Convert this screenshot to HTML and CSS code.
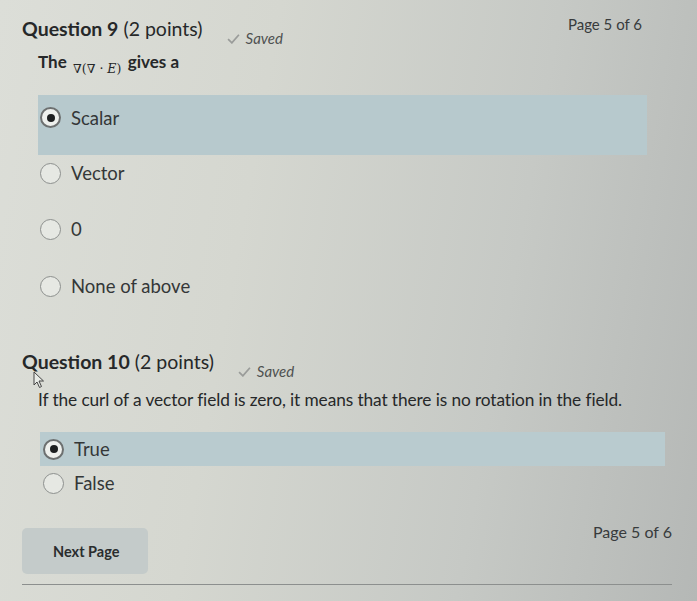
FILE: index.html
```html
<!DOCTYPE html>
<html>
<head>
<meta charset="utf-8">
<link rel="stylesheet" href="styles.css">
</head>
<body>
<div class="page">
  <div class="top">
    <div class="qhead q9">
      <span class="qtitle">Question 9</span> <span class="pts">(2 points)</span>
      <span class="saved"><svg class="check" viewBox="0 0 12 10" width="13" height="11"><path d="M1 5.5 L4.5 9 L11 1.5" fill="none" stroke="#9a9c9a" stroke-width="1.6"/></svg>Saved</span>
    </div>
    <div class="pageno top-pageno">Page 5 of 6</div>
  </div>
  <div class="prompt"><b>The</b> <span class="math">∇(∇ · <i>E</i>)</span> <b>gives a</b></div>

  <div class="q9opts">
    <div class="opt sel"><span class="radio on"></span><span>Scalar</span></div>
    <div class="opt o2"><span class="radio"></span><span>Vector</span></div>
    <div class="opt o3"><span class="radio"></span><span>0</span></div>
    <div class="opt o4"><span class="radio"></span><span>None of above</span></div>
  </div>

  <div class="qhead q10">
    <span class="qtitle">Question 10</span> <span class="pts">(2 points)</span>
    <span class="saved"><svg class="check" viewBox="0 0 12 10" width="13" height="11"><path d="M1 5.5 L4.5 9 L11 1.5" fill="none" stroke="#9a9c9a" stroke-width="1.6"/></svg>Saved</span>
    <svg class="cursor" viewBox="0 0 12 18" width="12" height="18"><path d="M1 1 L1 14 L4 11 L6.5 16.5 L8.5 15.5 L6 10 L10.5 10 Z" fill="#e8ebe6" stroke="#444" stroke-width="1"/></svg>
  </div>
  <div class="prompt2">If the curl of a vector field is zero, it means that there is no rotation in the field.</div>

  <div class="q10opts">
    <div class="opt2 sel2"><span class="radio on"></span><span>True</span></div>
    <div class="opt2"><span class="radio"></span><span>False</span></div>
  </div>

  <div class="bottom">
    <button class="next">Next Page</button>
    <div class="pageno bottom-pageno">Page 5 of 6</div>
  </div>
  <div class="rule"></div>
</div>
</body>
</html>
```
FILE: styles.css
```css
html, body {
  margin: 0;
  padding: 0;
}
body {
  width: 697px;
  height: 601px;
  overflow: hidden;
  font-family: Lato, "Open Sans", sans-serif;
  color: #262829;
  background: linear-gradient(100deg, #dcded8 0%, #d5d7d0 35%, #c6c9c5 70%, #b5b8b6 100%);
}
.page {
  padding: 0 25px 0 22px;
}
.top {
  display: flex;
  justify-content: space-between;
  align-items: flex-start;
}
.qhead {
  font-size: 19.5px;
  line-height: 24px;
  height: 24px;
  position: relative;
  display: flex;
  align-items: baseline;
}
.q9 {
  margin-top: 17px;
}
.qtitle {
  font-weight: 700;
}
.pts {
  margin-left: 5px;
}
.saved {
  margin-left: 24px;
  font-size: 15px;
  font-style: italic;
  color: #4e5150;
  position: relative;
  top: 8px;
}
.check {
  margin-right: 6px;
}
.top-pageno {
  margin-top: 15px;
  margin-right: 30px;
  font-size: 15px;
}
.pageno {
  color: #383b3c;
}
.prompt {
  margin: 10px 0 0 16px;
  font-size: 17px;
  line-height: 22px;
  height: 22px;
}
.prompt b {
  font-weight: 700;
}
.math {
  font-family: "DejaVu Serif", "Liberation Serif", serif;
  font-size: 12.5px;
  position: relative;
  top: 5px;
  margin: 0 2px;
}
.q9opts {
  display: flex;
  flex-direction: column;
  margin-top: 22px;
  margin-left: 16px;
  margin-right: 25px;
}
.opt {
  display: flex;
  align-items: center;
  gap: 10px;
  font-size: 18.5px;
  color: #343738;
  padding-left: 2px;
  height: 22px;
}
.sel {
  background: #b7c9cd;
  height: 60px;
  align-items: flex-start;
  padding-top: 12px;
  box-sizing: border-box;
}
.o2 {
  margin-top: 7px;
}
.o3 {
  margin-top: 34px;
}
.o4 {
  margin-top: 35px;
}
.radio {
  width: 21px;
  height: 21px;
  border-radius: 50%;
  border: 1px solid #8d908e;
  background: #e6e8e3;
  box-sizing: border-box;
  display: inline-flex;
  align-items: center;
  justify-content: center;
  flex: none;
}
.radio.on {
  border: 2px solid #6d7070;
  background: #eef0ed;
}
.radio.on::after {
  content: "";
  width: 8px;
  height: 8px;
  border-radius: 50%;
  background: #1d1f20;
}
.q10 {
  margin-top: 53px;
}
.cursor {
  position: absolute;
  left: 11px;
  top: 21px;
}
.prompt2 {
  margin: 15px 0 0 16px;
  font-size: 17.3px;
  line-height: 22px;
  letter-spacing: -0.1px;
}
.q10opts {
  display: flex;
  flex-direction: column;
  margin-top: 21px;
  margin-left: 18px;
  margin-right: 7px;
}
.opt2 {
  display: flex;
  align-items: center;
  gap: 10px;
  font-size: 18.5px;
  color: #343738;
  height: 34px;
  padding-left: 3px;
}
.sel2 {
  background: #b9cbcf;
}
.bottom {
  display: flex;
  justify-content: space-between;
  align-items: flex-start;
  margin-top: 28px;
}
.next {
  font-family: Lato, sans-serif;
  font-weight: 700;
  font-size: 14.5px;
  color: #2a2d2e;
  background: #c4cbca;
  border: none;
  border-radius: 5px;
  width: 126px;
  height: 46px;
  text-align: left;
  padding: 0 0 0 31px;
}
.bottom-pageno {
  margin-top: -6px;
  font-size: 16px;
}
.rule {
  margin-top: 10px;
  height: 1px;
  background: #8c8f8e;
}
```
